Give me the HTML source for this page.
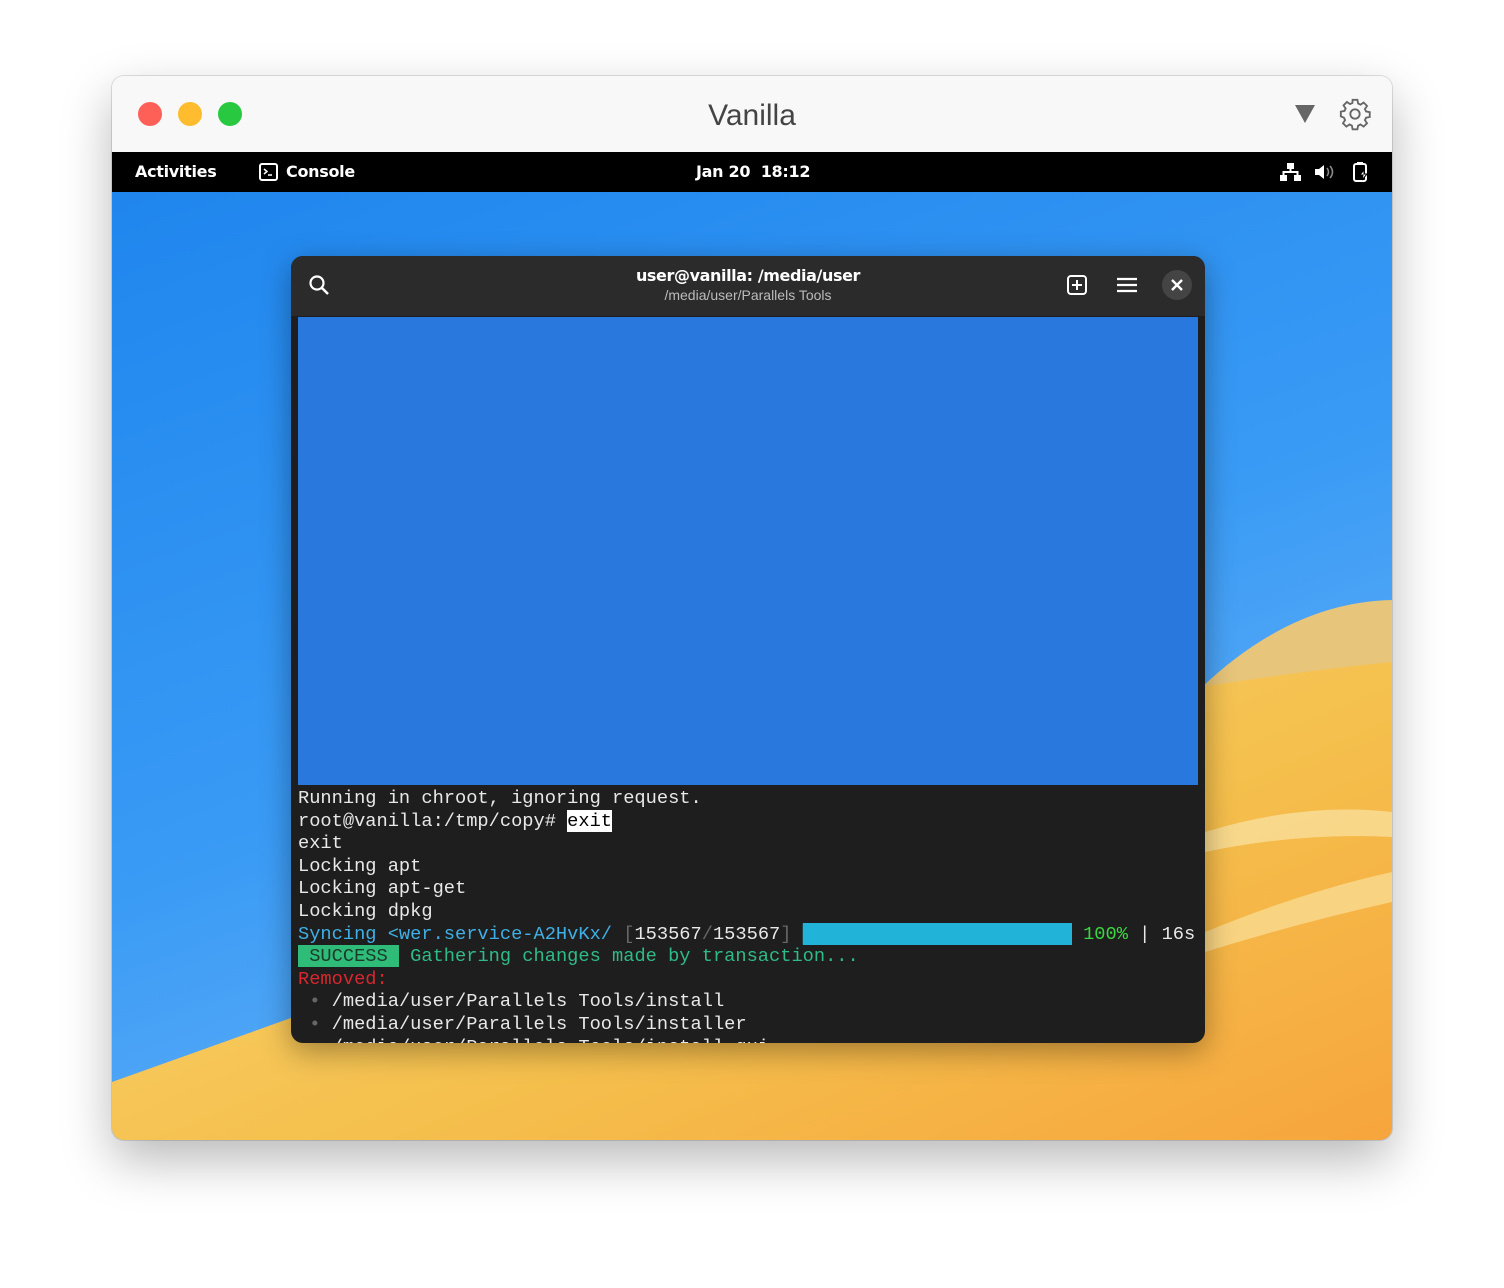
<!DOCTYPE html>
<html><head><meta charset="utf-8"><style>
*{margin:0;padding:0;box-sizing:border-box}
body{width:1504px;height:1288px;background:#fff;position:relative;overflow:hidden;font-family:"Liberation Sans","DejaVu Sans",sans-serif}
.win{position:absolute;left:112px;top:76px;width:1280px;height:1064px;border-radius:12px;overflow:hidden;box-shadow:0 20px 50px rgba(0,0,0,.28),0 0 0 1px rgba(0,0,0,.12)}
.title{height:76px;background:#f8f8f8;position:relative}
.dot{position:absolute;top:26px;width:24px;height:24px;border-radius:50%}
.tt{position:absolute;left:0;right:0;top:23px;text-align:center;font-size:30px;color:#444}
.bar{height:40px;background:#000;color:#fff;position:relative;font-family:"DejaVu Sans",sans-serif;font-size:16px;font-weight:bold}
.bar span{position:absolute;top:10px;letter-spacing:-0.3px}
.desk{position:absolute;top:116px;left:0;width:1280px;height:948px;background:linear-gradient(160deg,#1f86ee 0%,#3a9bf5 50%,#7dbcf7 100%)}
.term{position:absolute;left:179px;top:64px;width:914px;height:787px;background:#1e1e1e;border-radius:12px;overflow:hidden;box-shadow:0 8px 30px rgba(0,0,0,.35)}
.th{height:60px;background:#2b2b2b;position:relative;color:#fff;text-align:center}
.mono{font-family:"Liberation Mono","DejaVu Sans Mono",monospace;font-size:18.7px;line-height:22.6px;color:#e8e8e8;white-space:pre;position:absolute;left:7px;top:531px}
</style></head><body>
<div class="win">
 <div class="title">
  <div class="dot" style="left:26px;background:#fe5f57"></div>
  <div class="dot" style="left:66px;background:#febc2e"></div>
  <div class="dot" style="left:106px;background:#28c840"></div>
  <div class="tt">Vanilla</div>
  <svg style="position:absolute;left:1182px;top:28px" width="22" height="20"><path d="M1 1H21L11 19Z" fill="#666"/></svg>
  <svg style="position:absolute;left:1226px;top:21px" width="34" height="34" viewBox="0 0 24 24"><path d="M10.3 2h3.4l.5 2.6 1.7.8 2.2-1.5 2.4 2.4-1.5 2.2.8 1.7 2.6.5v3.4l-2.6.5-.8 1.7 1.5 2.2-2.4 2.4-2.2-1.5-1.7.8-.5 2.6h-3.4l-.5-2.6-1.7-.8-2.2 1.5-2.4-2.4 1.5-2.2-.8-1.7L2 13.7v-3.4l2.6-.5.8-1.7-1.5-2.2 2.4-2.4 2.2 1.5 1.7-.8z" fill="none" stroke="#666" stroke-width="1.3"/><circle cx="12" cy="12" r="3.3" fill="none" stroke="#666" stroke-width="1.3"/></svg>
 </div>
 <div class="bar">
  <span style="left:23px">Activities</span>
  <svg style="position:absolute;left:147px;top:11px" width="19" height="18"><rect x="1" y="1" width="17" height="16" rx="2" fill="none" stroke="#fff" stroke-width="2"/><path d="M5 6l3 2.5-3 2.5M9 12h4" stroke="#fff" stroke-width="1.5" fill="none"/></svg>
  <span style="left:174px">Console</span>
  <span style="left:584px">Jan 20&nbsp; 18:12</span>
  <svg style="position:absolute;left:1168px;top:10px" width="22" height="20"><rect x="7" y="1" width="7" height="6" fill="#fff"/><rect x="0" y="13" width="7" height="6" fill="#fff"/><rect x="14" y="13" width="7" height="6" fill="#fff"/><path d="M10.5 7v3M3.5 13v-3h14v3" stroke="#fff" stroke-width="2" fill="none"/></svg>
  <svg style="position:absolute;left:1202px;top:11px" width="22" height="18"><path d="M1 6h4l5-4v14l-5-4H1z" fill="#fff"/><path d="M13 5q3 4 0 8M16 3q5 6 0 12" stroke="#888" stroke-width="1.6" fill="none"/></svg>
  <svg style="position:absolute;left:1240px;top:9px" width="18" height="22"><rect x="2" y="3" width="12" height="17" rx="2" fill="none" stroke="#fff" stroke-width="2"/><rect x="5" y="1" width="6" height="3" fill="#fff"/><path d="M12 9l-4 5h3l-1 5 5-6h-3z" fill="#fff" stroke="#000" stroke-width="1"/></svg>
 </div>
 <div class="desk">
  <svg style="position:absolute;left:0;top:0" width="1280" height="948">
   <defs><linearGradient id="y" x1="0" y1="0" x2="1" y2="1"><stop offset="0" stop-color="#f8d878"/><stop offset=".6" stop-color="#f5c04d"/><stop offset="1" stop-color="#f6a53c"/></linearGradient></defs>
   <path d="M0 890 Q560 690 1090 495 Q1200 450 1280 410 L1280 948 L0 948Z" fill="url(#y)"/>
   <path d="M1090 495 Q1180 410 1280 408 L1280 470 Q1180 480 1090 495Z" fill="#e7c57a"/>
   <path d="M1093 640 Q1190 610 1280 620 L1280 645 Q1190 640 1093 660Z" fill="#f9df9a" opacity=".8"/>
   <path d="M1093 740 Q1190 700 1280 680 L1280 710 Q1190 730 1093 760Z" fill="#f9df9a" opacity=".7"/>
  </svg>
  <div class="term">
   <div class="th">
    <svg style="position:absolute;left:17px;top:18px" width="22" height="22"><circle cx="9" cy="9" r="6.5" fill="none" stroke="#fff" stroke-width="2.2"/><path d="M14 14l6 6" stroke="#fff" stroke-width="2.5"/></svg>
    <div style="position:absolute;left:0;right:0;top:10px;font-size:16px;font-weight:bold;font-family:'DejaVu Sans',sans-serif;letter-spacing:-0.4px">user@vanilla: /media/user</div>
    <div style="position:absolute;left:0;right:0;top:31px;font-size:14px;color:#bbb">/media/user/Parallels Tools</div>
    <svg style="position:absolute;left:776px;top:19px" width="20" height="20"><rect x="1" y="1" width="18" height="18" rx="3" fill="none" stroke="#fff" stroke-width="2"/><path d="M10 5v10M5 10h10" stroke="#fff" stroke-width="2"/></svg>
    <svg style="position:absolute;left:826px;top:21px" width="20" height="16"><path d="M0 2h20M0 8h20M0 14h20" stroke="#fff" stroke-width="2.2"/></svg>
    <div style="position:absolute;left:871px;top:14px;width:30px;height:30px;border-radius:50%;background:#444"></div>
    <svg style="position:absolute;left:880px;top:23px" width="12" height="12"><path d="M1 1l10 10M11 1L1 11" stroke="#fff" stroke-width="2.4"/></svg>
   </div>
   <div style="position:absolute;left:7px;top:61px;width:900px;height:468px;background:#2878de"></div>
   <div class="mono">Running in chroot, ignoring request.
root@vanilla:/tmp/copy# <span style="background:#fff;color:#000">exit</span>
exit
Locking apt
Locking apt-get
Locking dpkg
<span style="color:#3fb0e6">Syncing &lt;wer.service-A2HvKx/</span> <span style="color:#666">[</span>153567<span style="color:#666">/</span>153567<span style="color:#666">]</span> <span style="background:#22b4d8;color:#22b4d8">████████████████████████</span> <span style="color:#3ad640">100%</span> | 16s
<span style="background:#2fbb78;color:#1a3a2a"> SUCCESS </span> <span style="color:#2fbb88">Gathering changes made by transaction...</span>
<span style="color:#d8272f">Removed:</span>
 <span style="color:#666">•</span> /media/user/Parallels Tools/install
 <span style="color:#666">•</span> /media/user/Parallels Tools/installer
 <span style="color:#666">•</span> /media/user/Parallels Tools/install-gui</div>
  </div>
 </div>
</div>
</body></html>
